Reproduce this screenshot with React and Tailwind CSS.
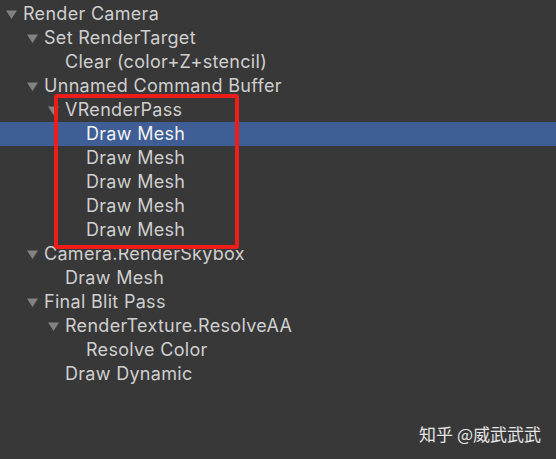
import React from 'react'

const rows = [
  { label: 'Render Camera', level: 0, open: true },
  { label: 'Set RenderTarget', level: 1, open: true },
  { label: 'Clear (color+Z+stencil)', level: 2 },
  { label: 'Unnamed Command Buffer', level: 1, open: true },
  { label: 'VRenderPass', level: 2, open: true },
  { label: 'Draw Mesh', level: 3, selected: true },
  { label: 'Draw Mesh', level: 3 },
  { label: 'Draw Mesh', level: 3 },
  { label: 'Draw Mesh', level: 3 },
  { label: 'Draw Mesh', level: 3 },
  { label: 'Camera.RenderSkybox', level: 1, open: true },
  { label: 'Draw Mesh', level: 2 },
  { label: 'Final Blit Pass', level: 1, open: true },
  { label: 'RenderTexture.ResolveAA', level: 2, open: true },
  { label: 'Resolve Color', level: 3 },
  { label: 'Draw Dynamic', level: 2 },
]

const indent = ['pl-[6px]', 'pl-[27px]', 'pl-[48px]', 'pl-[69px]']

const Arrow = () => (
  <svg width="11" height="9" viewBox="0 0 11 9" className="shrink-0">
    <path d="M0 0.5 L11 0.5 L5.5 9 Z" fill="#828282" />
  </svg>
)

const Row = ({ row }) => (
  <div
    className={`h-6 flex items-center ${indent[row.level]} ${
      row.selected ? 'bg-[#3e5e95] text-[#f2f2f2]' : 'text-[#cfcfcf]'
    }`}
  >
    <div className="w-[17px] shrink-0 flex items-center">
      {row.open && <Arrow />}
    </div>
    <span className="whitespace-nowrap leading-none tracking-[0.3px]">{row.label}</span>
  </div>
)

export default function App() {
  return (
    <div
      className="relative w-[556px] h-[459px] bg-[#383838] overflow-hidden pt-[2px] text-[18px]"
      style={{ fontFamily: 'Inter, "Noto Sans", sans-serif' }}
    >
      <div className="flex flex-col">
        {rows.map((row, i) => (
          <Row key={i} row={row} />
        ))}
      </div>

      {/* annotation box */}
      <div className="absolute left-[54px] top-[94px] w-[185px] h-[155px] border-[4px] border-[#ee1d1a] rounded-[3px]"></div>

      {/* watermark */}
      <div
        className="absolute right-[15px] bottom-[13px] text-[17px] text-[#e6e6e6] whitespace-nowrap"
        style={{ fontFamily: '"Noto Sans CJK SC", sans-serif' }}
      >
        知乎 @威武武武
      </div>
    </div>
  )
}
